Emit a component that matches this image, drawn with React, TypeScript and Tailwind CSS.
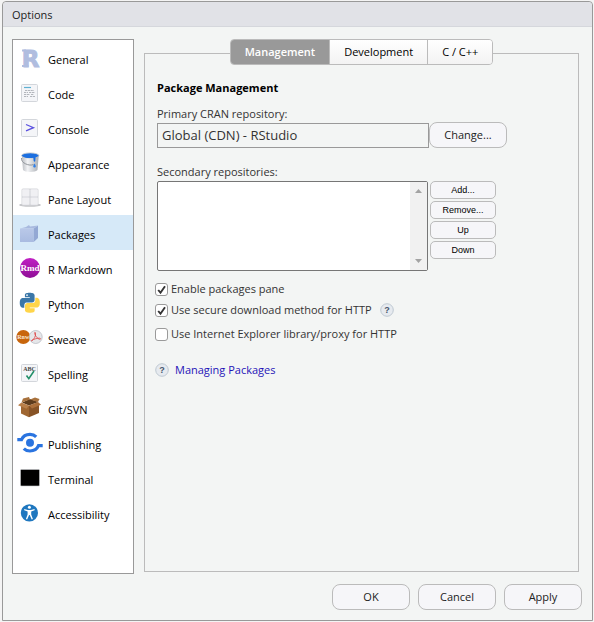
import React, { useState } from "react";
import { clsx } from "clsx";

const GeneralIcon = () => (
  <>
    <text x="14.500" y="20.500" textAnchor="middle" fontFamily="DejaVu Sans, sans-serif" fontWeight="700" fontSize="23" fill="#b0bddf" stroke="#b0bddf" strokeWidth="1">
      R
    </text>
    <path d="M6 20h6.500M6 4.500h4" stroke="#b0bddf" strokeWidth="2" />
  </>
);

const Sheet = () => (
  <rect x="5.500" y="3.500" width="16" height="17" rx="1" fill="#f4f5f8" stroke="#d3d6db" />
);

const CodeIcon = () => (
  <>
    <Sheet />
    <path d="M8 6.500h7" stroke="#5fb0d2" strokeWidth="1.200" />
    <path d="M9 9.500h9M8 11.500h4m1 0h6M8 13.500h6m1 0h3M8 15.500h4m2 0h5" stroke="#b3b6bc" strokeWidth="1" strokeDasharray="2.200 .6" />
  </>
);

const ConsoleIcon = () => (
  <>
    <Sheet />
    <path d="M10 8.500l7.500 3.200-7.500 3.200" fill="none" stroke="#5a50e0" strokeWidth="1.300" />
  </>
);

const AppearanceIcon = () => (
  <>
    <defs>
      <linearGradient id="bucket" x1="0" y1="0" x2="1" y2="0">
        <stop offset="0" stopColor="#b9bcc1" />
        <stop offset=".35" stopColor="#f3f4f6" />
        <stop offset="1" stopColor="#a9adb3" />
      </linearGradient>
    </defs>
    <path d="M5.800 4.500L7 19c1.500 2.600 13 2.600 14.500 0l1.200-14.500z" fill="url(#bucket)" />
    <ellipse cx="14.200" cy="4.500" rx="8.600" ry="2.600" fill="#1c6fe0" stroke="#c2c6cc" strokeWidth=".8" />
    <path d="M6.300 5c3 2.500 8 2.300 11 1.800l.4 3.200c.2 1 1.500 1 1.600 0l.3-3.800 2.600-1.200z" fill="#1c6fe0" />
    <path d="M18.500 12.500c2 2.700 1.300 4 0 4s-2-1.300 0-4z" fill="#2f7fe8" />
    <path d="M5.500 7c-1 5 8 8.500 12 6.500" fill="none" stroke="#888c92" strokeWidth=".9" />
  </>
);

const PaneIcon = () => (
  <>
    <ellipse cx="14" cy="19" rx="11" ry="1.800" fill="#c4c5c8" />
    <rect x="5.500" y="2.500" width="17" height="17" rx="1.500" fill="#d6d7dc" />
    <g fill="#f0f0f3">
      <rect x="6.200" y="3.200" width="7.200" height="7.200" rx="1" />
      <rect x="14.600" y="3.200" width="7.200" height="7.200" rx="1" />
      <rect x="6.200" y="11.600" width="7.200" height="7.200" rx="1" />
      <rect x="14.600" y="11.600" width="7.200" height="7.200" rx="1" />
    </g>
  </>
);

const PackagesIcon = () => (
  <>
    <defs>
      <linearGradient id="pkg" x1="0" y1="0" x2="0" y2="1">
        <stop offset="0" stopColor="#b9c8e8" />
        <stop offset="1" stopColor="#a9bbe1" />
      </linearGradient>
    </defs>
    <path d="M4 7.500L10 6l3-2 1 1.500 8-1-4.500 3z" fill="#a9badf" />
    <path d="M4 7.500h13.700V21H4z" fill="url(#pkg)" />
    <path d="M17.700 7.500l4.300-3V17l-4.300 4z" fill="#93a8d4" />
  </>
);

const MarkdownIcon = () => (
  <>
    <defs>
      <linearGradient id="rmd" x1="0" y1="0" x2="0" y2="1">
        <stop offset="0" stopColor="#c01fc4" />
        <stop offset="1" stopColor="#8f0f96" />
      </linearGradient>
    </defs>
    <circle cx="14" cy="12" r="10" fill="url(#rmd)" />
    <text x="14" y="15" textAnchor="middle" fontFamily="Liberation Serif, serif" fontWeight="700" fontSize="9" fill="#fff">
      Rmd
    </text>
  </>
);

const PythonIcon = () => (
  <g transform="translate(3.800 1.800) scale(.83)">
    <path
      fill="#3b77a8"
      d="M14.25.18l.9.2.73.26.59.3.45.32.34.34.25.34.16.33.1.3.04.26.02.2-.01.13V8.5l-.05.63-.13.55-.21.46-.26.38-.3.31-.33.25-.35.19-.35.14-.33.1-.3.07-.26.04-.21.02H8.77l-.69.05-.59.14-.5.22-.41.27-.33.32-.27.35-.2.36-.15.37-.1.35-.07.32-.04.27-.02.21v3.06H3.17l-.21-.03-.28-.07-.32-.12-.35-.18-.36-.26-.36-.36-.35-.46-.32-.59-.28-.73-.21-.88-.14-1.05-.05-1.23.06-1.22.16-1.04.24-.87.32-.71.36-.57.4-.44.42-.33.42-.24.4-.16.36-.1.32-.05.24-.01h.16l.06.01h8.16v-.83H6.18l-.01-2.75-.02-.37.05-.34.11-.31.17-.28.25-.26.31-.23.38-.2.44-.18.51-.15.58-.12.64-.1.71-.06.77-.04.84-.02 1.27.05zm-6.3 1.98l-.23.33-.08.41.08.41.23.34.33.22.41.09.41-.09.33-.22.23-.34.08-.41-.08-.41-.23-.33-.33-.22-.41-.09-.41.09z"
    />
    <path
      fill="#ffd54a"
      d="M21.1 6.11l.28.06.32.12.35.18.36.27.36.35.35.47.32.59.28.73.21.88.14 1.04.05 1.23-.06 1.23-.16 1.04-.24.86-.32.71-.36.57-.4.45-.42.33-.42.24-.4.16-.36.09-.32.05-.24.02-.16-.01h-8.22v.82h5.84l.01 2.76.02.36-.05.34-.11.31-.17.29-.25.25-.31.24-.38.2-.44.17-.51.15-.58.13-.64.09-.71.07-.77.04-.84.01-1.27-.04-1.07-.14-.9-.2-.73-.25-.59-.3-.45-.33-.34-.34-.25-.34-.16-.33-.1-.3-.04-.25-.02-.2.01-.13v-5.34l.05-.64.13-.54.21-.46.26-.38.3-.32.33-.24.35-.2.35-.14.33-.1.3-.06.26-.04.21-.02.13-.01h5.84l.69-.05.59-.14.5-.21.41-.28.33-.32.27-.35.2-.36.15-.36.1-.35.07-.32.04-.28.02-.21V6.07h2.09l.14.01z"
    />
  </g>
);

const SweaveIcon = () => (
  <>
    <circle cx="7.300" cy="11" r="7" fill="#c8660c" />
    <text x="7.300" y="13" textAnchor="middle" fontFamily="Liberation Serif, serif" fontWeight="700" fontSize="6" fill="#fbe9d6">
      Rnw
    </text>
    <circle cx="19.700" cy="11" r="6.500" fill="#e6e7ea" stroke="#b9bcc4" strokeWidth=".8" />
    <path d="M15.500 14.800c2.500-1 4.500-5 4-7.800-.3-1.300-1.300-.6-.7 1 1 2.800 3 5 5 5.300 1.300.1 1-1.200-.6-1.100-2.500.1-5 .8-7.200 2.100-.9.600-.8 1 -.5.500z" fill="none" stroke="#dd4444" strokeWidth=".8" />
  </>
);

const SpellingIcon = () => (
  <>
    <Sheet />
    <text x="13.500" y="9.500" textAnchor="middle" fontFamily="Liberation Serif, serif" fontWeight="700" fontSize="6" fill="#444">
      ABC
    </text>
    <path d="M10.500 14.500l2.300 3.200L18 10" fill="none" stroke="#23906a" strokeWidth="1.600" />
  </>
);

const GitIcon = () => (
  <>
    <path d="M6 6.500l8-3.500 8.500 3L13 9.500z" fill="#5e3c1c" />
    <path d="M5.500 6.500L7 2.500 13 1l1 2.500zM14 3.500l5-2L23.500 3 22 6z" fill="#a8713c" />
    <path d="M5 8l8 2v11.300L5 17.500z" fill="#9f6631" />
    <path d="M13 10l10-2.500V17l-10 4.300z" fill="#875326" />
    <path d="M5.500 6.500L2 9.200l8.500 3.600L13 9.500z" fill="#b97f49" />
    <path d="M13 9.500l9-3.500 3 2.700-9 3.900z" fill="#ab6f3a" />
  </>
);

const PublishingIcon = () => (
  <g fill="none" stroke="#2a74e0" strokeWidth="3.200">
    <circle cx="14" cy="11.700" r="4" fill="#2a74e0" stroke="none" />
    <path d="M1.300 8.700h4.200C7.200 4.800 10.400 3.400 14 3.400c2.600 0 4.600.8 6.200 2.400" />
    <path d="M26.700 14.700h-4.200c-1.700 3.900-4.900 5.300-8.500 5.300-2.600 0-4.600-.8-6.200-2.400" />
  </g>
);

const TerminalIcon = () => <rect x="4.500" y="3.500" width="19" height="16.500" rx="1" fill="#000" stroke="#c8cacc" strokeWidth=".6" />;

const AccessibilityIcon = () => (
  <>
    <circle cx="13.400" cy="11.900" r="8.600" fill="#1f77bf" />
    <circle cx="13.400" cy="6.300" r="1.500" fill="#fff" />
    <path d="M8.200 8l3.700.9h3l3.700-.9v1.300l-3.400 1.300v2.900l1.700 4.500-1.200.5-2-4.500h-.6l-2 4.500-1.200-.5 1.700-4.500v-2.900L8.200 9.300z" fill="#fff" />
  </>
);

const sections = [
  { label: "General", Icon: GeneralIcon },
  { label: "Code", Icon: CodeIcon },
  { label: "Console", Icon: ConsoleIcon },
  { label: "Appearance", Icon: AppearanceIcon },
  { label: "Pane Layout", Icon: PaneIcon },
  { label: "Packages", Icon: PackagesIcon },
  { label: "R Markdown", Icon: MarkdownIcon },
  { label: "Python", Icon: PythonIcon },
  { label: "Sweave", Icon: SweaveIcon },
  { label: "Spelling", Icon: SpellingIcon },
  { label: "Git/SVN", Icon: GitIcon },
  { label: "Publishing", Icon: PublishingIcon },
  { label: "Terminal", Icon: TerminalIcon },
  { label: "Accessibility", Icon: AccessibilityIcon },
];

const tabs = ["Management", "Development", "C / C++"];

function HelpIcon() {
  return (
    <svg viewBox="0 0 14 14" className="h-3.5 w-3.5 shrink-0" aria-hidden="true">
      <circle cx="7" cy="7" r="6.300" fill="#e6eaef" stroke="#b9c4ce" strokeWidth=".9" />
      <text x="7" y="10.200" textAnchor="middle" fontFamily="Liberation Sans, sans-serif" fontWeight="700" fontSize="9" fill="#46566c">
        ?
      </text>
    </svg>
  );
}

interface CheckRowProps {
  label: string;
  checked: boolean;
  onChange: (value: boolean) => void;
}

function CheckRow({ label, checked, onChange }: CheckRowProps) {
  return (
    <label className="flex h-4 items-center gap-[3px]">
      <span className="relative flex h-[13px] w-[13px] shrink-0">
        <input
          type="checkbox"
          checked={checked}
          onChange={(e) => onChange(e.target.checked)}
          className="h-[13px] w-[13px] appearance-none rounded-[3px] border border-[#9a9a9a] bg-white"
        />
        {checked && (
          <svg viewBox="0 0 13 13" className="pointer-events-none absolute inset-0 h-[13px] w-[13px]">
            <path d="M3.200 7l2.300 2.700L10 3.300" fill="none" stroke="#333" strokeWidth="1.900" />
          </svg>
        )}
      </span>
      {label}
    </label>
  );
}

function DialogButton({ children }: { children: React.ReactNode }) {
  return (
    <button type="button" className="h-[26px] w-[78px] rounded-lg border border-[#bbb] bg-[#f6f6f9] text-[#222]">
      {children}
    </button>
  );
}

export default function App() {
  const [section, setSection] = useState("Packages");
  const [tab, setTab] = useState("Management");
  const [enablePane, setEnablePane] = useState(true);
  const [secure, setSecure] = useState(true);
  const [useProxy, setUseProxy] = useState(false);

  return (
    <div className="flex min-h-screen flex-col bg-[#f4f4f4] p-px pl-0.5 font-['Open_Sans','Noto_Sans',sans-serif] text-[11px] leading-4 text-[#333]">
      <div role="dialog" aria-label="Options" className="flex flex-1 flex-col rounded-t border border-[#999] bg-[#f3f5f4]">
        <header className="flex h-[25px] items-center rounded-t border-b border-[#d5d7dc] bg-[#e1e2e7] px-[9px] pt-0.5 text-[#222]">
          Options
        </header>

        <div className="flex flex-1 gap-2.5 px-[9px] pt-3 pr-[13px]">
          <nav className="w-[122px] shrink-0 border border-[#999] bg-white">
            {sections.map(({ label, Icon }) => (
              <button
                key={label}
                type="button"
                onClick={() => setSection(label)}
                className={clsx("flex h-[35px] w-full items-center gap-1 pl-[3px] text-black", section === label && "bg-[#d6e9f8]")}
              >
                <svg viewBox="0 0 28 23" className="h-[23px] w-7 shrink-0 overflow-visible" aria-hidden="true">
                  <Icon />
                </svg>
                <span className="pt-1 whitespace-nowrap">{label}</span>
              </button>
            ))}
          </nav>

          <main className="flex min-w-0 flex-1 flex-col pb-0.5">
            <div role="tablist" className="z-10 flex self-center overflow-hidden rounded border border-[#bbb]">
              {tabs.map((name) => (
                <button
                  key={name}
                  role="tab"
                  type="button"
                  aria-selected={tab === name}
                  onClick={() => setTab(name)}
                  className={clsx(
                    "h-6 border-r border-[#bbb] px-3.5 last:border-r-0",
                    tab === name ? "bg-[#999] font-semibold text-white" : "bg-linear-to-b from-white to-[#f3f3f3] text-black"
                  )}
                >
                  {name}
                </button>
              ))}
            </div>

            <div className="-mt-3 flex-1 border border-[#bbb] pt-[26px] pl-2.5">
              <h2 className="pl-0.5 font-bold text-black">Package Management</h2>

              <div className="mt-2.5 pl-0.5">
                <label htmlFor="cran" className="block">Primary CRAN repository:</label>
                <div className="flex items-center">
                  <input
                    id="cran"
                    readOnly
                    value="Global (CDN) - RStudio"
                    className="h-[25px] w-[272px] border border-[#999] bg-[#f3f5f4] px-1 text-[13px]"
                  />
                  <DialogButton>Change...</DialogButton>
                </div>
              </div>

              <div className="mt-4 pl-0.5">
                <label htmlFor="repos" className="mb-px block">Secondary repositories:</label>
                <div className="flex gap-0.5">
                  <div className="flex h-[90px] w-[271px] rounded-xs border border-[#767676] bg-white">
                    <select id="repos" multiple className="min-w-0 flex-1 appearance-none overflow-hidden outline-none" />
                    <div className="flex w-[17px] flex-col items-center justify-between bg-[#f1f1f1] py-[7px]">
                      <svg viewBox="0 0 7 4" className="h-1 w-[7px]">
                        <path d="M0 4l3.500-4L7 4z" fill="#a3a3a3" />
                      </svg>
                      <svg viewBox="0 0 7 4" className="h-1 w-[7px]">
                        <path d="M0 0l3.500 4L7 0z" fill="#a3a3a3" />
                      </svg>
                    </div>
                  </div>
                  <div className="flex flex-col gap-0.5">
                    {["Add...", "Remove...", "Up", "Down"].map((name) => (
                      <button
                        key={name}
                        type="button"
                        className="h-[18px] w-[66px] rounded-[5px] border border-[#bbb] bg-[#f6f6f9] font-['Liberation_Sans',sans-serif] text-[9px] leading-4 text-black"
                      >
                        {name}
                      </button>
                    ))}
                  </div>
                </div>
              </div>

              <div className="mt-2.5 flex flex-col gap-[5px]">
                <CheckRow label="Enable packages pane" checked={enablePane} onChange={setEnablePane} />
                <div className="flex items-center gap-2 pb-[3px]">
                  <CheckRow label="Use secure download method for HTTP" checked={secure} onChange={setSecure} />
                  <HelpIcon />
                </div>
                <CheckRow label="Use Internet Explorer library/proxy for HTTP" checked={useProxy} onChange={setUseProxy} />
              </div>

              <a href="#managing-packages" className="mt-5 flex w-fit items-center gap-1.5 text-[#1f14b8]">
                <HelpIcon />
                Managing Packages
              </a>
            </div>
          </main>
        </div>

        <footer className="flex justify-end gap-2 p-2.5">
          <DialogButton>OK</DialogButton>
          <DialogButton>Cancel</DialogButton>
          <DialogButton>Apply</DialogButton>
        </footer>
      </div>
    </div>
  );
}
